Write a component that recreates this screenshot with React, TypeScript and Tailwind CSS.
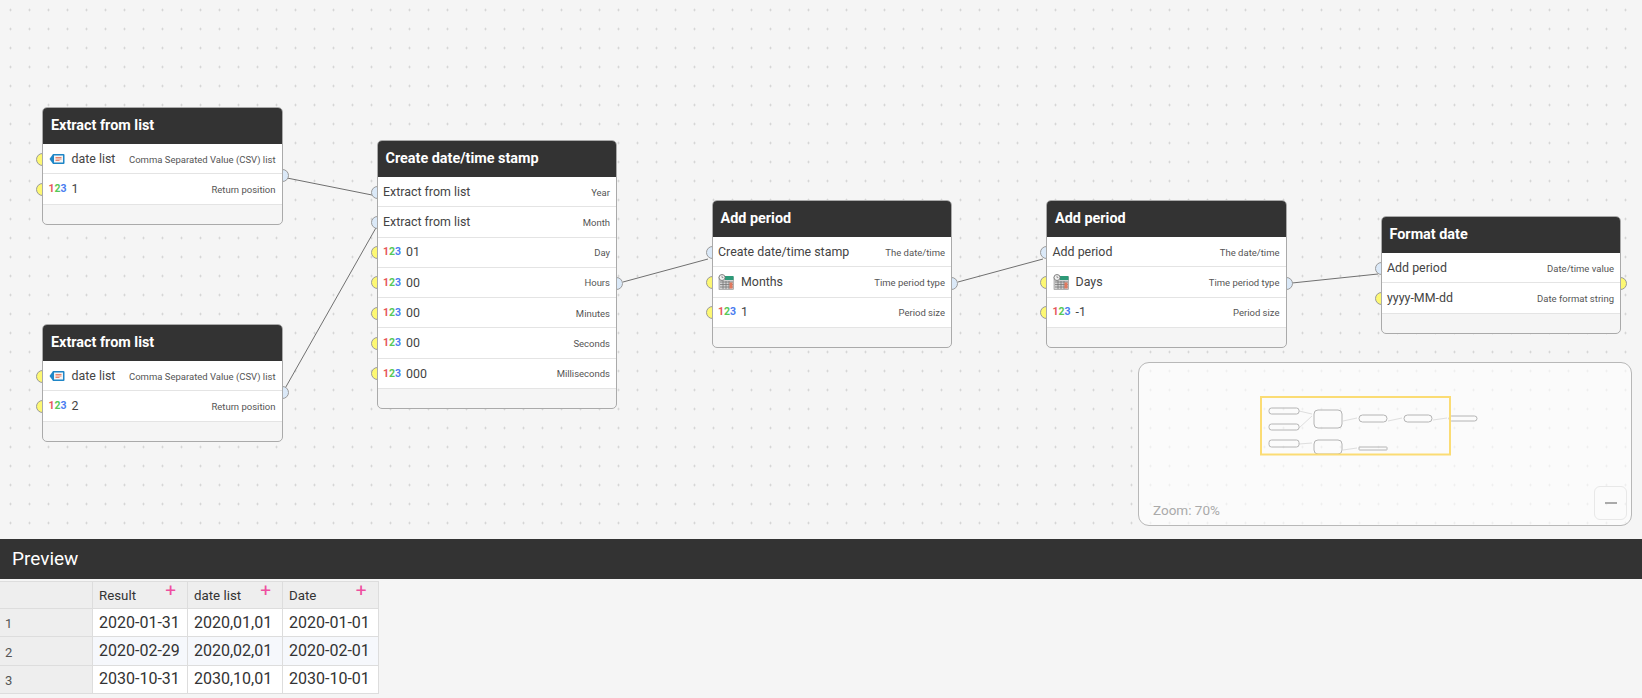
import React from 'react';

type RowKind = 'link' | 'text' | 'number' | 'list' | 'calendar';

interface RowData {
  kind: RowKind;
  value: string;
  label: string;
}

interface NodeData {
  title: string;
  left: number;
  top: number;
  outPort: number;
  outColor?: 'blue' | 'yellow';
  rows: RowData[];
}

const nodes: NodeData[] = [
  {
    title: 'Extract from list',
    left: 42,
    top: 107,
    outPort: 68,
    rows: [
      { kind: 'list', value: 'date list', label: 'Comma Separated Value (CSV) list' },
      { kind: 'number', value: '1', label: 'Return position' },
    ],
  },
  {
    title: 'Extract from list',
    left: 42,
    top: 324,
    outPort: 68,
    rows: [
      { kind: 'list', value: 'date list', label: 'Comma Separated Value (CSV) list' },
      { kind: 'number', value: '2', label: 'Return position' },
    ],
  },
  {
    title: 'Create date/time stamp',
    left: 376.5,
    top: 140,
    outPort: 143,
    rows: [
      { kind: 'link', value: 'Extract from list', label: 'Year' },
      { kind: 'link', value: 'Extract from list', label: 'Month' },
      { kind: 'number', value: '01', label: 'Day' },
      { kind: 'number', value: '00', label: 'Hours' },
      { kind: 'number', value: '00', label: 'Minutes' },
      { kind: 'number', value: '00', label: 'Seconds' },
      { kind: 'number', value: '000', label: 'Milliseconds' },
    ],
  },
  {
    title: 'Add period',
    left: 711.5,
    top: 200,
    outPort: 83,
    rows: [
      { kind: 'link', value: 'Create date/time stamp', label: 'The date/time' },
      { kind: 'calendar', value: 'Months', label: 'Time period type' },
      { kind: 'number', value: '1', label: 'Period size' },
    ],
  },
  {
    title: 'Add period',
    left: 1046,
    top: 200,
    outPort: 83,
    rows: [
      { kind: 'link', value: 'Add period', label: 'The date/time' },
      { kind: 'calendar', value: 'Days', label: 'Time period type' },
      { kind: 'number', value: '-1', label: 'Period size' },
    ],
  },
  {
    title: 'Format date',
    left: 1380.5,
    top: 216,
    outPort: 67,
    outColor: 'yellow',
    rows: [
      { kind: 'link', value: 'Add period', label: 'Date/time value' },
      { kind: 'text', value: 'yyyy-MM-dd', label: 'Date format string' },
    ],
  },
];

const links = [
  [287, 178, 372, 195],
  [283, 392, 377, 226],
  [623, 282, 708, 259],
  [958, 282, 1043, 259],
  [1292, 283, 1378, 274],
];

const miniNodes = [
  [1269, 408, 30, 6, 2.5],
  [1269, 424, 30, 6, 2.5],
  [1269, 440, 30, 7, 2.5],
  [1314, 410, 28, 18, 4],
  [1314, 440, 28, 14, 4],
  [1359, 415, 28, 7, 3.5],
  [1359, 447, 28, 3, 0.5],
  [1404, 415, 28, 7, 3.5],
  [1449, 416, 28, 5, 2.5],
];

const miniLinks = [
  [1299, 411, 1312, 414],
  [1299, 428, 1312, 416],
  [1299, 444, 1312, 443],
  [1343, 421, 1357, 418],
  [1343, 450, 1357, 448],
  [1388, 421, 1402, 418],
  [1433, 420, 1447, 418],
];

const previewRows = [
  ['2020-01-31', '2020,01,01', '2020-01-01'],
  ['2020-02-29', '2020,02,01', '2020-02-01'],
  ['2030-10-31', '2030,10,01', '2030-10-01'],
];

const NumberIcon = () => (
  <span className="w-[16px] shrink-0 text-[10.5px] font-bold leading-none">
    <span className="text-[#e6555a]">1</span>
    <span className="text-[#58c858]">2</span>
    <span className="text-[#4a7cf0]">3</span>
  </span>
);

const ListIcon = () => (
  <svg width="16" height="12" viewBox="0 0 16 12" className="shrink-0">
    <path d="M4 1h10.5a1 1 0 0 1 1 1v8a1 1 0 0 1-1 1H4L0.5 6z" fill="#1f86c7" />
    <rect x="5" y="2.5" width="9" height="7" fill="#f4f4f4" />
    <path d="M6.5 4.5h6M6.5 6h6M6.5 7.5h4" stroke="#e8836b" strokeWidth="1" />
  </svg>
);

const CalendarIcon = () => (
  <svg width="16" height="16" viewBox="0 0 16 16" className="shrink-0">
    <rect x="1" y="3" width="14.5" height="12.5" fill="#d2d2d2" stroke="#8a8a8a" strokeWidth="0.6" />
    <rect x="7" y="2" width="8.5" height="4" fill="#2d9a78" />
    <path d="M2 8h13M2 10.5h13M2 13h13M5 7v8M8 7v8M11 7v8" stroke="#777" strokeWidth="0.8" />
    <rect x="11.5" y="8.5" width="3" height="6" fill="#e2795e" />
    <circle cx="4" cy="3.5" r="3" fill="#f1f1f1" stroke="#777" strokeWidth="0.9" />
    <path d="M4 1.8v1.8h1.4" stroke="#777" strokeWidth="0.7" fill="none" />
  </svg>
);

const rowIcon = (kind: RowKind) => {
  if (kind === 'number') return <NumberIcon />;
  if (kind === 'list') return <ListIcon />;
  if (kind === 'calendar') return <CalendarIcon />;
  return null;
};

const Port = ({ side, color, top }: { side: 'left' | 'right'; color: 'blue' | 'yellow'; top: number }) => (
  <span
    className={`absolute h-[13px] w-[13px] rounded-full border border-[#9a9a9a] ${color === 'blue' ? 'bg-[#dbe9f8]' : 'bg-[#fdf873]'} ${side === 'left' ? 'left-[-6px]' : 'right-[-6px]'}`}
    style={{ top: top - 6.5 }}
  />
);

const FlowNode = ({ node }: { node: NodeData }) => (
  <div className="absolute w-[240.5px]" style={{ left: node.left, top: node.top }}>
    {node.rows.map((row, index) => (
      <Port
        key={index}
        side="left"
        color={row.kind === 'link' ? 'blue' : 'yellow'}
        top={37 + index * 30.3 + 15}
      />
    ))}
    <Port side="right" color={node.outColor ?? 'blue'} top={node.outPort} />
    <div className="relative overflow-hidden rounded-[5px] border border-[#aaaaaa] bg-[#f5f5f5]">
      <div className="flex h-[36px] items-center bg-[#333333] pl-[8px] text-[14.4px] font-bold text-white">
        {node.title}
      </div>
      <div className="mb-[19px]">
        {node.rows.map((row, index) => (
          <div
            key={index}
            className="flex h-[30.3px] items-center gap-[6px] border-b border-[#e4e4e4] bg-white pl-[5.5px] pr-[6px] pt-[1px]"
          >
            {rowIcon(row.kind)}
            <span className={`text-[12.4px] text-[#444444] ${row.kind === 'link' || row.kind === 'text' ? '' : 'ml-[1px]'}`}>
              {row.value}
            </span>
            <span className="ml-auto pt-[1px] text-[9.5px] text-[#555555]">{row.label}</span>
          </div>
        ))}
      </div>
    </div>
  </div>
);

const MiniMap = () => (
  <div className="absolute left-[1138px] top-[362px] h-[164px] w-[494px] rounded-[11px] border border-[#b8b8b8] bg-white/60">
    <svg width="494" height="164" viewBox="1138 362 494 164" className="absolute left-[-1px] top-[-1px]">
      {miniLinks.map((l, index) => (
        <line key={index} x1={l[0]} y1={l[1]} x2={l[2]} y2={l[3]} stroke="#dedede" strokeWidth="1" />
      ))}
      {miniNodes.map((n, index) => (
        <rect
          key={index}
          x={n[0]}
          y={n[1]}
          width={n[2]}
          height={n[3]}
          rx={n[4]}
          fill="none"
          stroke="#b4b4b4"
          strokeWidth="1"
        />
      ))}
      <rect x="1261" y="397" width="189" height="57.5" fill="none" stroke="#fbdc74" strokeWidth="2" />
    </svg>
    <span className="absolute bottom-[5px] left-[14px] text-[13.5px] text-[#aaaaaa]">Zoom: 70%</span>
    <div className="absolute bottom-[5px] right-[4px] flex h-[34px] w-[33px] items-center justify-center rounded-[6px] border border-[#e8e8e8]">
      <span className="h-[2px] w-[12px] bg-[#aaaaaa]" />
    </div>
  </div>
);

const App = () => (
  <div className="h-[698px] w-[1642px] overflow-hidden bg-[#f5f5f5] font-['Roboto',sans-serif]">
    <div className="relative h-[539px] bg-[radial-gradient(circle,#cccccc_0.9px,transparent_1.1px)] bg-[length:19px_19px] bg-[position:1px_0.5px]">
      <svg width="1642" height="539" className="absolute left-0 top-0">
        {links.map((l, index) => (
          <line key={index} x1={l[0]} y1={l[1]} x2={l[2]} y2={l[3]} stroke="#707070" strokeWidth="1" />
        ))}
      </svg>
      {nodes.map((node, index) => (
        <FlowNode key={index} node={node} />
      ))}
      <MiniMap />
    </div>
    <div className="flex h-[40px] items-center bg-[#333333] pl-[12px] text-[19px] text-white">Preview</div>
    <table className="mt-[2px] table-fixed border-collapse">
      <colgroup>
        <col className="w-[92.5px]" />
        <col className="w-[95px]" />
        <col className="w-[95px]" />
        <col className="w-[95.5px]" />
      </colgroup>
      <thead>
        <tr className="h-[27px] bg-[#eeeeee]">
          <th className="border border-[#dddddd] border-l-0" />
          {['Result', 'date list', 'Date'].map(name => (
            <th key={name} className="border border-[#dddddd] pl-[6px] text-left text-[13.3px] font-normal text-[#333333]">
              <div className="relative pt-[2px]">
                {name}
                <span className="absolute right-[11px] top-[-3px] text-[19px] font-normal leading-none text-[#ee4fa0]">+</span>
              </div>
            </th>
          ))}
        </tr>
      </thead>
      <tbody>
        {previewRows.map((row, index) => (
          <tr key={index} className={`h-[28.3px] ${index === 1 ? 'bg-[#f6f8fc]' : 'bg-white'}`}>
            <td className="border border-[#dddddd] border-l-0 bg-[#eeeeee] pl-[5px] pt-[3px] text-[13px] text-[#555555]">
              {index + 1}
            </td>
            {row.map((value, cellIndex) => (
              <td key={cellIndex} className="whitespace-nowrap border border-[#dddddd] pl-[6px] text-[16px] text-[#333333]">
                {value}
              </td>
            ))}
          </tr>
        ))}
      </tbody>
    </table>
  </div>
);

export default App;
